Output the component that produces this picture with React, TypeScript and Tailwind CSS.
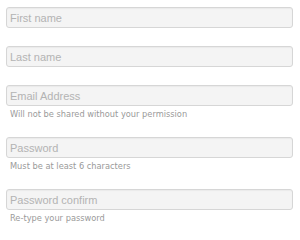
import React from "react";

const fields = [
  { ph: "First name", hint: "" },
  { ph: "Last name", hint: "" },
  { ph: "Email Address", hint: "Will not be shared without your permission" },
  { ph: "Password", hint: "Must be at least 6 characters" },
  { ph: "Password confirm", hint: "Re-type your password" },
];

export default function App() {
  return (
    <div className="w-[300px] h-[240px] bg-white pt-[7px] px-[6px] flex flex-col">
      {fields.map((f, i) => (
        <div key={i} className={f.hint ? "mb-[17px]" : "mb-[18px]"}>
          <input
            placeholder={f.ph}
            className="block w-[287px] h-[21px] rounded-[3px] border border-[#d6d6d6] bg-[#f4f4f4] px-[3px] text-[11px] text-[#555] placeholder:text-[#b3b3b3] outline-none shadow-[inset_0_1px_1px_rgba(0,0,0,0.04)]"
            style={{ fontFamily: '"Liberation Sans", Arial, sans-serif' }}
          />
          {f.hint && (
            <div
              className="mt-[3px] pl-[4px] text-[8.25px] leading-[11px] text-[#9a9a9a]"
              style={{ fontFamily: '"DejaVu Sans", Verdana, sans-serif' }}
            >
              {f.hint}
            </div>
          )}
        </div>
      ))}
    </div>
  );
}
